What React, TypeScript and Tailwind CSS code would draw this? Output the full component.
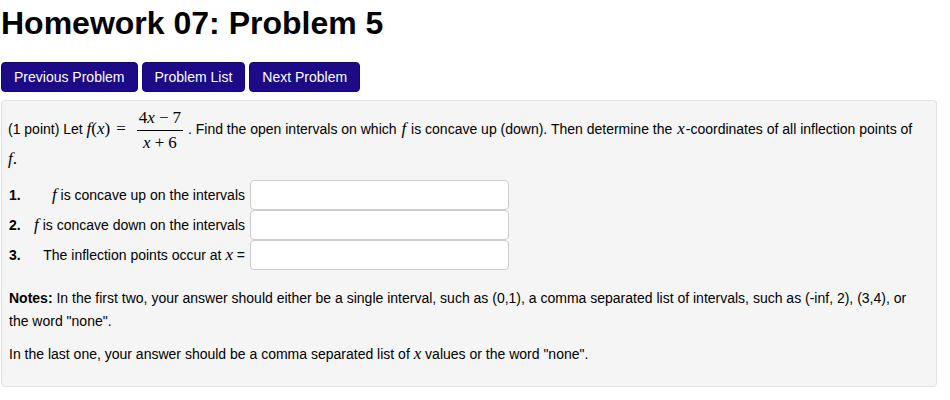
import React from "react";

const M = ({ children }: { children: React.ReactNode }) => (
  <span className="font-['Liberation_Serif',serif] italic text-[17px]">{children}</span>
);
const R = ({ children }: { children: React.ReactNode }) => (
  <span className="font-['Liberation_Serif',serif] not-italic text-[17px]">{children}</span>
);

export default function App() {
  return (
    <div className="w-[950px] h-[400px] bg-white text-black font-['Liberation_Sans',Arial,Helvetica,sans-serif]">
      <h1 className="pl-[1px] pt-[5px] text-[32px] font-bold leading-[36px]">Homework 07: Problem 5</h1>
      <div className="mt-[21px] ml-[1px] flex gap-[4px]">
        {["Previous Problem", "Problem List", "Next Problem"].map((t) => (
          <button
            key={t}
            className="h-[30px] px-[12px] rounded-[4px] bg-[#1c0a87] text-white text-[14px] leading-none border border-[#150670]"
          >
            {t}
          </button>
        ))}
      </div>
      <div className="mt-[8px] ml-[1px] w-[936px] h-[287px] bg-[#f5f5f5] border border-[#e2e2e2] rounded-[4px] pl-[6px] pr-[9px] pt-[10px] text-[14px] leading-[23px]">
        <div className="whitespace-nowrap">
          <span>(1 point) Let </span>
          <M>f</M>
          <R>(</R>
          <M>x</M>
          <R>)</R>
          <R>
            <span className="mx-[6px]">=</span>
          </R>
          <span className="inline-flex flex-col items-center align-middle mx-[5px] -my-[4px]">
            <span className="px-[2px] leading-[22px]">
              <R>4</R>
              <M>x</M>
              <R>
                <span className="mx-[4px]">−</span>7
              </R>
            </span>
            <span className="mt-[1px] h-px w-full bg-black" />
            <span className="mt-[1px] px-[2px] leading-[21px]">
              <M>x</M>
              <R>
                <span className="mx-[4px]">+</span>6
              </R>
            </span>
          </span>
          <span>. Find the open intervals on which </span>
          <span className="mx-[1px]">
            <M>f</M>
          </span>
          <span> is concave up (down). Then determine the </span>
          <span className="mx-[1px]">
            <M>x</M>
          </span>
          <span>-coordinates of all inflection points of</span>
        </div>
        <div className="leading-[18px]">
          <M>f</M>
          <R>.</R>
        </div>
        <div className="mt-[12px] flex flex-col">
          {[
            { n: "1.", label: <><M>f</M> is concave up on the intervals</> },
            { n: "2.", label: <><M>f</M> is concave down on the intervals</> },
            { n: "3.", label: <>The inflection points occur at <M>x</M> =</> },
          ].map((r) => (
            <div key={r.n} className="flex items-center h-[30px]">
              <span className="w-[14px] pl-[1px] font-bold">{r.n}</span>
              <span className="w-[223px] text-right">{r.label}</span>
              <input className="ml-[5px] w-[259px] h-[30px] bg-white border border-[#cccccc] rounded-[4px]" />
            </div>
          ))}
        </div>
        <p className="mt-[17px] pl-[1px]">
          <b>Notes:</b> In the first two, your answer should either be a single interval, such as (0,1), a comma
          separated list of intervals, such as (-inf, 2), (3,4), or the word "none".
        </p>
        <p className="mt-[9px] pl-[1px]">
          In the last one, your answer should be a comma separated list of <M>x</M> values or the word "none".
        </p>
      </div>
    </div>
  );
}
